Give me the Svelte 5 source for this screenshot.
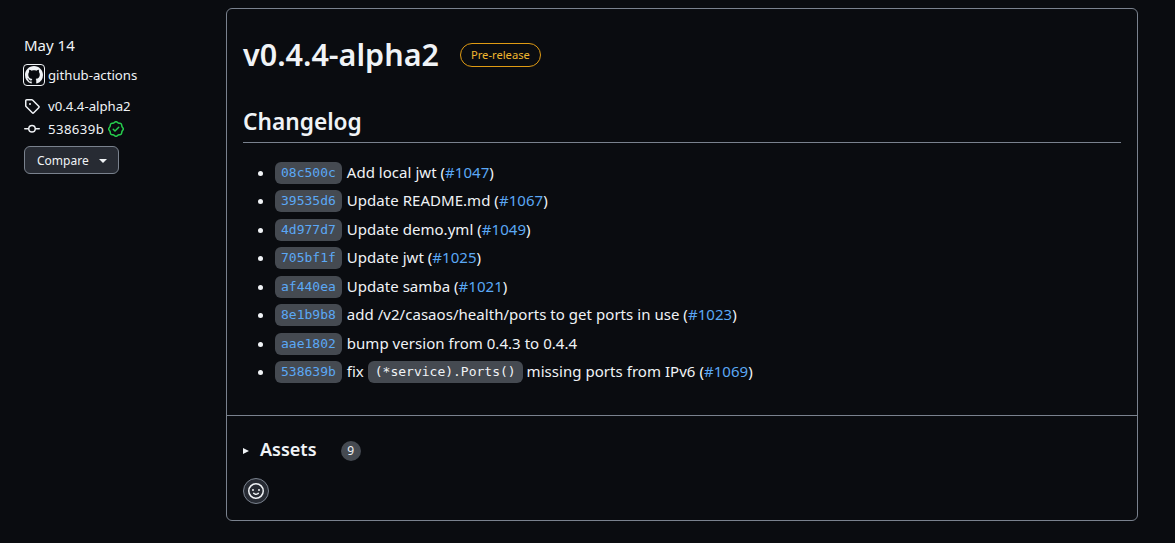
<script lang="ts">
  const commits = [
    { sha: '08c500c', parts: [{ t: 'Add local jwt (' }, { a: '#1047' }, { t: ')' }] },
    { sha: '39535d6', parts: [{ t: 'Update README.md (' }, { a: '#1067' }, { t: ')' }] },
    { sha: '4d977d7', parts: [{ t: 'Update demo.yml (' }, { a: '#1049' }, { t: ')' }] },
    { sha: '705bf1f', parts: [{ t: 'Update jwt (' }, { a: '#1025' }, { t: ')' }] },
    { sha: 'af440ea', parts: [{ t: 'Update samba (' }, { a: '#1021' }, { t: ')' }] },
    { sha: '8e1b9b8', parts: [{ t: 'add /v2/casaos/health/ports to get ports in use (' }, { a: '#1023' }, { t: ')' }] },
    { sha: 'aae1802', parts: [{ t: 'bump version from 0.4.3 to 0.4.4' }] },
    { sha: '538639b', parts: [{ t: 'fix ' }, { c: '(*service).Ports()' }, { t: ' missing ports from IPv6 (' }, { a: '#1069' }, { t: ')' }] }
  ];
</script>

<div class="page">
  <aside class="side">
    <div class="date">May 14</div>
    <div class="author">
      <span class="avatar">
        <svg viewBox="0 0 16 16" width="18" height="18" fill="currentColor"><path d="M8 0c4.42 0 8 3.58 8 8a8.013 8.013 0 0 1-5.45 7.59c-.4.08-.55-.17-.55-.38 0-.27.01-1.13.01-2.2 0-.75-.25-1.23-.54-1.48 1.78-.2 3.65-.88 3.65-3.95 0-.88-.31-1.59-.82-2.15.08-.2.36-1.02-.08-2.12 0 0-.67-.22-2.2.82-.64-.18-1.32-.27-2-.27-.68 0-1.36.09-2 .27-1.53-1.03-2.2-.82-2.2-.82-.44 1.1-.16 1.92-.08 2.12-.51.56-.82 1.28-.82 2.15 0 3.06 1.86 3.75 3.64 3.95-.23.2-.44.55-.51 1.07-.46.21-1.61.55-2.33-.66-.15-.24-.6-.83-1.23-.82-.67.01-.27.38.01.53.34.19.73.9.82 1.13.16.45.68 1.31 2.69.94 0 .67.01 1.3.01 1.49 0 .21-.15.45-.55.38A7.995 7.995 0 0 1 0 8c0-4.42 3.58-8 8-8Z"/></svg>
      </span>
      <span>github-actions</span>
    </div>
    <div class="meta tag">
      <svg viewBox="0 0 16 16" width="16" height="16" fill="currentColor"><path d="M1 7.775V2.75C1 1.784 1.784 1 2.75 1h5.025c.464 0 .91.184 1.238.513l6.25 6.25a1.75 1.75 0 0 1 0 2.474l-5.026 5.026a1.75 1.75 0 0 1-2.474 0l-6.25-6.25A1.752 1.752 0 0 1 1 7.775Zm1.5 0c0 .066.026.13.073.177l6.25 6.25a.25.25 0 0 0 .354 0l5.025-5.025a.25.25 0 0 0 0-.354l-6.25-6.25a.25.25 0 0 0-.177-.073H2.75a.25.25 0 0 0-.25.25ZM6 5a1 1 0 1 1 0 2 1 1 0 0 1 0-2Z"/></svg>
      <span>v0.4.4-alpha2</span>
    </div>
    <div class="meta commit">
      <svg viewBox="0 0 16 16" width="16" height="16" fill="currentColor"><path d="M11.93 8.5a4.002 4.002 0 0 1-7.86 0H.75a.75.75 0 0 1 0-1.5h3.32a4.002 4.002 0 0 1 7.86 0h3.32a.75.75 0 0 1 0 1.5Zm-1.43-.75a2.5 2.5 0 1 0-5 0 2.5 2.5 0 0 0 5 0Z"/></svg>
      <span>538639b</span>
      <svg class="verified" viewBox="0 0 16 16" width="16" height="16" fill="currentColor"><path d="m9.585.52.929.68c.153.112.331.186.518.215l1.138.175a2.678 2.678 0 0 1 2.24 2.24l.174 1.139c.029.187.103.365.215.518l.68.928a2.677 2.677 0 0 1 0 3.17l-.68.928a1.174 1.174 0 0 0-.215.518l-.175 1.138a2.678 2.678 0 0 1-2.241 2.241l-1.138.175a1.17 1.17 0 0 0-.518.215l-.928.68a2.677 2.677 0 0 1-3.17 0l-.928-.68a1.174 1.174 0 0 0-.518-.215L3.83 14.41a2.678 2.678 0 0 1-2.24-2.24l-.175-1.138a1.17 1.17 0 0 0-.215-.518l-.68-.928a2.677 2.677 0 0 1 0-3.17l.68-.928c.112-.153.186-.331.215-.518l.175-1.14a2.678 2.678 0 0 1 2.24-2.24l1.139-.175c.187-.029.365-.103.518-.215l.928-.68a2.677 2.677 0 0 1 3.17 0ZM7.303 1.728l-.927.68a2.67 2.67 0 0 1-1.18.489l-1.137.174a1.179 1.179 0 0 0-.987.987l-.174 1.136a2.677 2.677 0 0 1-.489 1.18l-.68.928a1.18 1.18 0 0 0 0 1.394l.68.927c.256.348.424.753.489 1.18l.174 1.137c.078.509.478.909.987.987l1.136.174a2.67 2.67 0 0 1 1.18.489l.928.68c.414.305.979.305 1.394 0l.927-.68a2.67 2.67 0 0 1 1.18-.489l1.137-.174a1.18 1.18 0 0 0 .987-.987l.174-1.136a2.67 2.67 0 0 1 .489-1.18l.68-.928a1.176 1.176 0 0 0 0-1.394l-.68-.927a2.686 2.686 0 0 1-.489-1.18l-.174-1.137a1.179 1.179 0 0 0-.987-.987l-1.136-.174a2.677 2.677 0 0 1-1.18-.489l-.928-.68a1.176 1.176 0 0 0-1.394 0ZM11.28 6.78l-3.75 3.75a.75.75 0 0 1-1.06 0L4.72 8.78a.751.751 0 0 1 1.06-1.06l1.22 1.22 3.22-3.22a.751.751 0 0 1 1.06 1.06Z"/></svg>
    </div>
    <button class="compare">Compare <span class="caret"></span></button>
  </aside>

  <main class="card">
    <div class="body">
      <div class="title">
        <h1>v0.4.4-alpha2</h1>
        <span class="label">Pre-release</span>
      </div>
      <h2>Changelog</h2>
      <ul>
        {#each commits as commit}
          <li>
            <code class="sha">{commit.sha}</code>
            {#each commit.parts as p}{#if p.a}<span class="link">{p.a}</span>{:else if p.c}<code>{p.c}</code>{:else}{p.t}{/if}{/each}
          </li>
        {/each}
      </ul>
    </div>
    <div class="foot">
      <div class="assets">
        <span class="tri"></span>
        <strong>Assets</strong>
        <span class="count">9</span>
      </div>
      <button class="smile" aria-label="Add reaction">
        <svg viewBox="0 0 16 16" width="16" height="16" fill="currentColor"><path d="M8 0a8 8 0 1 1 0 16A8 8 0 0 1 8 0ZM1.5 8a6.5 6.5 0 1 0 13 0 6.5 6.5 0 0 0-13 0Zm3.82 1.636a.75.75 0 0 1 1.038.175l.007.009c.103.118.22.222.35.31.264.178.683.37 1.285.37.602 0 1.02-.192 1.285-.371.13-.088.247-.192.35-.31l.007-.008a.75.75 0 0 1 1.222.87l-.022-.015c.02.013.021.015.021.015v.001l-.001.002-.002.003-.005.007-.014.019a2.066 2.066 0 0 1-.184.213c-.16.166-.338.316-.53.445-.63.418-1.37.638-2.127.629-.946 0-1.652-.308-2.126-.63a3.331 3.331 0 0 1-.715-.657l-.014-.02-.005-.006-.002-.003v-.002h-.001l.613-.432-.614.43a.75.75 0 0 1 .183-1.044ZM12 7a1 1 0 1 1-2 0 1 1 0 0 1 2 0ZM5 8a1 1 0 1 1 0-2 1 1 0 0 1 0 2Zm5.25 2.25.592.416a97.71 97.71 0 0 0-.592-.416Z"/></svg>
      </button>
    </div>
  </main>
</div>

<style>
  :global(body) {
    margin: 0;
    background: #0a0c10;
  }
  .page {
    display: flex;
    align-items: flex-start;
    height: 543px;
    box-sizing: border-box;
    padding: 8px 37px 0 24px;
    color: #f0f3f6;
    font-family: "Noto Sans", "Open Sans", sans-serif;
    font-size: 14px;
    overflow: hidden;
  }
  .side {
    width: 202px;
    flex: none;
    padding-top: 27px;
    font-size: 12px;
  }
  .date {
    font-size: 15px;
    line-height: 20px;
  }
  .author {
    display: flex;
    align-items: center;
    gap: 3px;
    margin-top: 9px;
    margin-left: -1px;
    font-size: 13.2px;
  }
  .avatar {
    display: flex;
    align-items: center;
    justify-content: center;
    width: 20px;
    height: 20px;
    border: 1px solid #f0f3f6;
    border-radius: 4px;
    background: #0a0c10;
  }
  .meta {
    display: flex;
    align-items: center;
    gap: 8px;
    font-size: 13.2px;
    line-height: 18px;
  }
  .tag {
    margin-top: 11px;
  }
  .commit {
    margin-top: 5px;
  }
  .commit span {
    letter-spacing: 0.4px;
  }
  .verified {
    margin-left: -4px;
    color: #26cd4d;
  }
  .compare {
    display: flex;
    align-items: center;
    height: 28px;
    width: 95px;
    box-sizing: border-box;
    margin-top: 8px;
    padding: 0 12px;
    border: 1px solid #7a828e;
    border-radius: 6px;
    background: #272b33;
    color: #f0f3f6;
    font: inherit;
    font-size: 12px;
  }
  .caret {
    margin-left: 10px;
    margin-top: 1px;
    border-style: solid;
    border-width: 4px 4px 0;
    border-color: #f0f3f6 transparent transparent;
  }
  .card {
    flex: 1;
    height: 513px;
    box-sizing: border-box;
    border: 1px solid #7a828e;
    border-radius: 6px;
  }
  .body {
    height: 407px;
    box-sizing: border-box;
    padding: 16px 16px 0;
    border-bottom: 1px solid #7a828e;
  }
  .title {
    display: flex;
    align-items: center;
    gap: 21px;
    height: 60px;
  }
  h1 {
    margin: 0 0 2px;
    font-size: 30.5px;
    font-weight: 600;
    line-height: 58px;
  }
  .label {
    box-sizing: border-box;
    height: 24px;
    padding: 0 10px;
    border: 1px solid #e09b13;
    border-radius: 12px;
    color: #f0b72f;
    font-size: 11.2px;
    line-height: 22px;
  }
  h2 {
    margin: 21px 0 0;
    padding-bottom: 4px;
    border-bottom: 1px solid #7a828e;
    font-size: 22.7px;
    font-weight: 600;
    line-height: 32px;
  }
  ul {
    margin: 15px 0 0;
    padding: 0 0 0 32px;
    font-size: 15px;
    letter-spacing: 0.04px;
  }
  li {
    height: 28.43px;
    line-height: 28.43px;
    white-space: nowrap;
  }
  li::marker {
    color: #f0f3f6;
  }
  code {
    display: inline-block;
    box-sizing: border-box;
    height: 22px;
    padding: 0 7px;
    border-radius: 6px;
    background: rgba(158, 167, 179, 0.4);
    font-family: "DejaVu Sans Mono", "Liberation Mono", monospace;
    font-size: 13px;
    line-height: 22px;
    letter-spacing: 0;
    vertical-align: 1px;
  }
  .sha {
    padding: 0 6px;
    margin-right: 1px;
    color: #5ba8f5;
  }
  .link {
    color: #5ba8f5;
  }
  .foot {
    padding: 17px 16px 0;
  }
  .assets {
    display: flex;
    align-items: center;
    height: 32px;
  }
  .tri {
    border-style: solid;
    border-width: 3.5px 0 3.5px 6px;
    border-color: transparent transparent transparent #f0f3f6;
    margin-right: 11px;
    margin-top: 3px;
  }
  strong {
    font-size: 18px;
    font-weight: 600;
  }
  .count {
    width: 20px;
    height: 20px;
    margin: 3px 0 0 24px;
    border-radius: 50%;
    background: rgba(158, 167, 179, 0.4);
    font-size: 12px;
    line-height: 20px;
    text-align: center;
  }
  .smile {
    display: flex;
    align-items: center;
    justify-content: center;
    width: 26px;
    height: 26px;
    margin-top: 13px;
    padding: 0;
    border: 1px solid #7a828e;
    border-radius: 50%;
    background: #272b33;
    color: #f0f3f6;
  }
</style>
